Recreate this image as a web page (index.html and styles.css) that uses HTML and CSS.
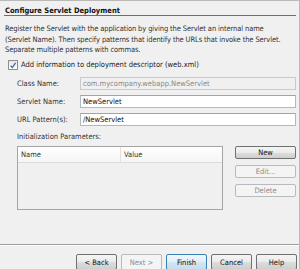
FILE: index.html
```html
<!DOCTYPE html>
<html lang="en">
<head>
  <meta charset="UTF-8" />
  <title>Configure Servlet Deployment</title>
  <link rel="stylesheet" href="styles.css">
</head>
<body>
  <div class="dialog">
    <div class="title">Configure Servlet Deployment</div>
    <div class="desc">
      Register the Servlet with the application by giving the Servlet an internal name<br>
      (Servlet Name). Then specify patterns that identify the URLs that invoke the Servlet.<br>
      Separate multiple patterns with commas.
    </div>
    <label class="check-row">
      <span class="checkbox">
        <svg viewBox="0 0 9 9" width="9" height="9"><path d="M1.8 4.6 L3.7 6.8 L7.4 1.6" fill="none" stroke="#3d5a8c" stroke-width="1.3"/></svg>
      </span>
      Add information to deployment descriptor (web.xml)
    </label>
    <div class="form">
      <span class="label">Class Name:</span>
      <div class="field disabled">com.mycompany.webapp.NewServlet</div>
      <span class="label">Servlet Name:</span>
      <div class="field">NewServlet</div>
      <span class="label">URL Pattern(s):</span>
      <div class="field">/NewServlet</div>
    </div>
    <div class="params-label">Initialization Parameters:</div>
    <div class="params">
      <div class="table">
        <div class="thead">
          <div class="th name">Name</div>
          <div class="th">Value</div>
        </div>
      </div>
      <div class="side-buttons">
        <button class="btn">New</button>
        <button class="btn" disabled>Edit...</button>
        <button class="btn" disabled>Delete</button>
      </div>
    </div>
    <div class="footer">
      <button class="btn">&lt; Back</button>
      <button class="btn" disabled>Next &gt;</button>
      <button class="btn default">Finish</button>
      <button class="btn">Cancel</button>
      <button class="btn">Help</button>
    </div>
  </div>
</body>
</html>
```

FILE: styles.css
```css
body {
  margin: 0;
  font-family: "DejaVu Sans Condensed", "DejaVu Sans", sans-serif;
  font-size: 7.5px;
  color: #222;
  background: #f0f0f0;
}
.dialog {
  width: 300px;
  height: 269px;
  box-sizing: border-box;
  border-top: 1px solid #b9b9b9;
  border-right: 1px solid #b9b9b9;
  background: #f0f0f0;
  display: flex;
  flex-direction: column;
  overflow: hidden;
}
.title {
  margin: 0 3px 0 4px;
  padding: 6px 0 0 1px;
  line-height: 8px;
  font-weight: bold;
  color: #111;
  border-bottom: 1px solid #6e6e6e;
}
.desc {
  margin-top: 8px;
  padding: 0 4px 0 5px;
  line-height: 10.5px;
  letter-spacing: -0.12px;
  white-space: nowrap;
  color: #333;
}
.check-row {
  display: flex;
  align-items: center;
  gap: 3px;
  margin-top: 4px;
  padding-left: 8px;
  height: 10px;
  line-height: 10px;
}
.checkbox {
  width: 8px;
  height: 8px;
  border: 1px solid #8e8f8f;
  background: linear-gradient(#e6e6e6, #ffffff);
  display: flex;
}
.form {
  display: grid;
  grid-template-columns: 63px 1fr;
  row-gap: 5px;
  margin-top: 7px;
  padding: 0 3px 0 17px;
  align-items: center;
}
.label {
  color: #333;
}
.field {
  height: 11px;
  line-height: 11px;
  border: 1px solid #b5b8bd;
  border-top-color: #a0a3a8;
  background: #ffffff;
  padding-left: 2px;
  color: #111;
}
.field.disabled {
  background: #f0f0f0;
  border-color: #c9c9c9;
  color: #8a8a8a;
}
.params-label {
  margin-top: 6px;
  padding-left: 17px;
  line-height: 10px;
  color: #333;
}
.params {
  display: flex;
  margin-top: 4px;
  padding: 0 3px 0 17px;
  gap: 12px;
}
.table {
  width: 206px;
  height: 64px;
  box-sizing: border-box;
  border: 1px solid #a5a5a5;
  background: #f0f0f0;
}
.thead {
  display: flex;
  height: 15px;
  line-height: 15px;
  background: linear-gradient(#ffffff, #f5f5f5);
  border-bottom: 1px solid #dcdcdc;
}
.th {
  padding-left: 3px;
  color: #333;
}
.th.name {
  width: 99px;
  border-right: 1px solid #e2e2e2;
}
.side-buttons {
  display: flex;
  flex-direction: column;
  gap: 6px;
  width: 61px;
}
.btn {
  font: inherit;
  height: 13px;
  padding: 0;
  border: 1px solid #707070;
  border-radius: 2px;
  background: linear-gradient(#f4f4f4, #ebebeb 50%, #dddddd 50%, #cfcfcf);
  color: #111;
  line-height: 11px;
}
.btn:disabled {
  border-color: #b7bbbf;
  background: #f4f4f4;
  color: #8d8d8d;
}
.btn.default {
  border-color: #3c7fb1;
  background: linear-gradient(#eef6fb, #e2eff8 50%, #d3e6f4 50%, #c6dff0);
}
.footer {
  margin-top: auto;
  box-sizing: border-box;
  height: 25px;
  flex-shrink: 0;
  border-top: 1px solid #a0a0a0;
  box-shadow: inset 0 1px 0 #ffffff;
  display: flex;
  align-items: flex-start;
  justify-content: flex-end;
  gap: 4px;
  padding: 9px 2px 0 0;
}
.footer .btn {
  width: 41px;
  height: 16px;
  flex-shrink: 0;
}
```
